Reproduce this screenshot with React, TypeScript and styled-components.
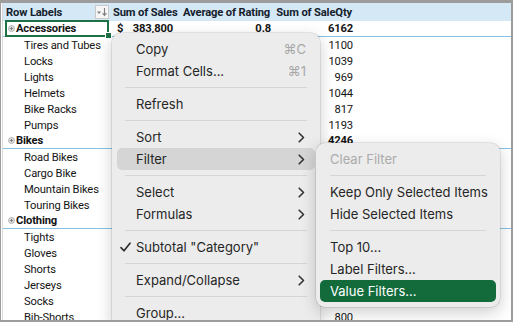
import React from "react";
import styled, { createGlobalStyle } from "styled-components";

const GlobalStyle = createGlobalStyle`
  html, body {
    margin: 0;
    padding: 0;
    background: #ffffff;
  }
  body {
    width: 513px;
    height: 322px;
    overflow: hidden;
  }
`;

const SHEET_FONT = `"Roboto", "Liberation Sans", sans-serif`;
const MENU_FONT = `"Inter", "Liberation Sans", "DejaVu Sans", sans-serif`;
const COLS = "107px 70px 95px 81px";

const Frame = styled.div`
  position: relative;
  width: 513px;
  height: 322px;
  box-sizing: border-box;
  border-style: solid;
  border-color: #9c9c9c;
  border-width: 3px 2px 2px 1px;
  overflow: hidden;
  background: #ffffff;
`;

const Sheet = styled.div`
  display: flex;
  flex-direction: column;
  margin-left: 1px;
  border-left: 1px solid #dadada;
  font-family: ${SHEET_FONT};
  font-size: 11.2px;
  letter-spacing: -0.15px;
  color: #141414;
`;

const HeaderRow = styled.div`
  display: grid;
  grid-template-columns: ${COLS};
  height: 18px;
  background: #d4e8f6;
  font-weight: 700;
  color: #14202c;
`;

const HeadCell = styled.div<{ $right?: boolean }>`
  display: flex;
  align-items: center;
  justify-content: ${(p) => (p.$right ? "flex-end" : "flex-start")};
  padding: ${(p) => (p.$right ? "0 4px 0 0" : "0 0 0 3px")};
  white-space: nowrap;
`;

const LabelHead = styled(HeadCell)`
  padding-left: 3px;
  justify-content: space-between;
`;

const FilterButton = styled.div`
  width: 14px;
  height: 14px;
  margin-right: 1px;
  box-sizing: border-box;
  border: 1px solid #c9c9c9;
  background: #f6f6f6;
  display: flex;
  align-items: center;
  justify-content: center;
`;

const Row = styled.div<{ $category?: boolean }>`
  display: grid;
  grid-template-columns: ${COLS};
  height: 16px;
  box-sizing: border-box;
  font-weight: ${(p) => (p.$category ? 700 : 400)};
  border-bottom: ${(p) => (p.$category ? "1px solid #86c1e4" : "none")};
`;

const LabelCell = styled.div<{ $level: number; $selected?: boolean }>`
  position: relative;
  display: flex;
  align-items: center;
  gap: 1px;
  padding-left: ${(p) => (p.$level === 0 ? "5px" : "21px")};
  white-space: nowrap;

  ${(p) =>
    p.$selected &&
    `
    &::before {
      content: "";
      position: absolute;
      left: 2px;
      right: 1px;
      top: -1px;
      bottom: -1px;
      border: 2px solid #1e7145;
    }
    &::after {
      content: "";
      position: absolute;
      right: -2px;
      bottom: -3px;
      width: 5px;
      height: 5px;
      background: #1e7145;
      border: 1px solid #ffffff;
    }
  `}
`;

const ValueCell = styled.div<{ $pad?: number }>`
  display: flex;
  align-items: center;
  justify-content: flex-end;
  padding-right: ${(p) => p.$pad ?? 4}px;
  white-space: nowrap;
`;

const MoneyCell = styled.div`
  display: flex;
  align-items: center;
  justify-content: space-between;
  padding: 0 7px 0 7px;
  white-space: nowrap;
`;

const Menu = styled.div<{ $left: number; $top: number; $width: number }>`
  position: absolute;
  left: ${(p) => p.$left}px;
  top: ${(p) => p.$top}px;
  width: ${(p) => p.$width}px;
  box-sizing: border-box;
  padding: 5px 0;
  background: #ececec;
  border-radius: 9px;
  box-shadow: 0 0 0 0.5px rgba(0, 0, 0, 0.16), 0 5px 16px rgba(0, 0, 0, 0.2);
  font-family: ${MENU_FONT};
  font-size: 13px;
  color: #262626;
`;

const Item = styled.div<{
  $inset: number;
  $indent: number;
  $active?: "gray" | "green";
  $disabled?: boolean;
}>`
  display: flex;
  align-items: center;
  height: 22px;
  margin: 0 ${(p) => p.$inset}px;
  padding: 0 10px 0 ${(p) => p.$indent}px;
  border-radius: 5px;
  white-space: nowrap;
  background: ${(p) =>
    p.$active === "gray" ? "#d5d5d5" : p.$active === "green" ? "#136b3c" : "transparent"};
  color: ${(p) =>
    p.$active === "green" ? "#ffffff" : p.$disabled ? "#ababab" : "#262626"};
`;

const Mark = styled.span`
  width: 19px;
  margin-left: -19px;
  display: flex;
  align-items: center;
  padding-left: 3px;
  box-sizing: border-box;
`;

const ItemText = styled.span`
  flex: 1;
`;

const Shortcut = styled.span`
  color: #a8a8a8;
  margin-right: -1px;
`;

const Separator = styled.div<{ $inset: number }>`
  height: 11px;
  margin: 0 ${(p) => p.$inset}px;
  display: flex;
  align-items: center;

  &::after {
    content: "";
    flex: 1;
    height: 1px;
    background: #d5d5d5;
  }
`;

type SheetRow = {
  label: string;
  level: 0 | 1;
  sales: string;
  rating: string;
  qty: string;
  selected?: boolean;
};

const rows: SheetRow[] = [
  { label: "Accessories", level: 0, sales: "383,800", rating: "0.8", qty: "6162", selected: true },
  { label: "Tires and Tubes", level: 1, sales: "66,000", rating: "0.8", qty: "1100" },
  { label: "Locks", level: 1, sales: "62,340", rating: "0.8", qty: "1039" },
  { label: "Lights", level: 1, sales: "58,140", rating: "0.8", qty: "969" },
  { label: "Helmets", level: 1, sales: "62,640", rating: "0.8", qty: "1044" },
  { label: "Bike Racks", level: 1, sales: "49,020", rating: "0.8", qty: "817" },
  { label: "Pumps", level: 1, sales: "71,580", rating: "0.8", qty: "1193" },
  { label: "Bikes", level: 0, sales: "254,760", rating: "0.8", qty: "4246" },
  { label: "Road Bikes", level: 1, sales: "63,900", rating: "0.8", qty: "1065" },
  { label: "Cargo Bike", level: 1, sales: "61,080", rating: "0.8", qty: "1018" },
  { label: "Mountain Bikes", level: 1, sales: "65,460", rating: "0.8", qty: "1091" },
  { label: "Touring Bikes", level: 1, sales: "64,320", rating: "0.8", qty: "1072" },
  { label: "Clothing", level: 0, sales: "352,440", rating: "0.8", qty: "5874" },
  { label: "Tights", level: 1, sales: "58,560", rating: "0.8", qty: "976" },
  { label: "Gloves", level: 1, sales: "60,420", rating: "0.8", qty: "1007" },
  { label: "Shorts", level: 1, sales: "57,840", rating: "0.8", qty: "964" },
  { label: "Jerseys", level: 1, sales: "62,100", rating: "0.8", qty: "1035" },
  { label: "Socks", level: 1, sales: "65,520", rating: "0.8", qty: "1092" },
  { label: "Bib-Shorts", level: 1, sales: "48,000", rating: "0.8", qty: "800" },
];

const ExpandIcon = () => (
  <svg width="7" height="7" viewBox="0 0 7 7">
    <circle cx="3.5" cy="3.5" r="3" fill="#e4e4e4" stroke="#a8a8a8" strokeWidth="0.8" />
    <path d="M1.8 3.5h3.4M3.5 1.8v3.4" stroke="#7a7a7a" strokeWidth="0.9" />
  </svg>
);

const FilterGlyph = () => (
  <svg width="12" height="10" viewBox="0 0 12 10">
    <path d="M1 4.5h4L3 7z" fill="#7d7d7d" />
    <path d="M8.5 1v7.5M6.6 6.2l1.9 2.3 1.9-2.3" fill="none" stroke="#7d7d7d" strokeWidth="1.1" />
  </svg>
);

const Chevron = () => (
  <svg width="7" height="11" viewBox="0 0 7 11">
    <path d="M1.2 1.2l4.3 4.3-4.3 4.3" fill="none" stroke="#333333" strokeWidth="1.6" strokeLinecap="round" strokeLinejoin="round" />
  </svg>
);

const Check = () => (
  <svg width="11" height="10" viewBox="0 0 11 10">
    <path d="M1 5.6l3 3.2L10 1.2" fill="none" stroke="#2a2a2a" strokeWidth="1.6" strokeLinecap="round" strokeLinejoin="round" />
  </svg>
);

type MenuEntry =
  | { sep: true }
  | {
      sep?: false;
      label: string;
      shortcut?: string;
      sub?: boolean;
      checked?: boolean;
      active?: "gray" | "green";
      disabled?: boolean;
    };

const mainMenu: MenuEntry[] = [
  { label: "Copy", shortcut: "⌘C" },
  { label: "Format Cells...", shortcut: "⌘1" },
  { sep: true },
  { label: "Refresh" },
  { sep: true },
  { label: "Sort", sub: true },
  { label: "Filter", sub: true, active: "gray" },
  { sep: true },
  { label: "Select", sub: true },
  { label: "Formulas", sub: true },
  { sep: true },
  { label: 'Subtotal "Category"', checked: true },
  { sep: true },
  { label: "Expand/Collapse", sub: true },
  { sep: true },
  { label: "Group..." },
];

const filterMenu: MenuEntry[] = [
  { label: "Clear Filter", disabled: true },
  { sep: true },
  { label: "Keep Only Selected Items" },
  { label: "Hide Selected Items" },
  { sep: true },
  { label: "Top 10..." },
  { label: "Label Filters..." },
  { label: "Value Filters...", active: "green" },
];

const MenuList: React.FC<{
  entries: MenuEntry[];
  inset: number;
  indent: number;
  sepInset: number;
}> = ({ entries, inset, indent, sepInset }) => (
  <>
    {entries.map((e, i) =>
      e.sep ? (
        <Separator key={i} $inset={sepInset} />
      ) : (
        <Item key={i} $inset={inset} $indent={indent} $active={e.active} $disabled={e.disabled}>
          {e.checked && (
            <Mark>
              <Check />
            </Mark>
          )}
          <ItemText>{e.label}</ItemText>
          {e.shortcut && <Shortcut>{e.shortcut}</Shortcut>}
          {e.sub && <Chevron />}
        </Item>
      )
    )}
  </>
);

export default function App() {
  return (
    <>
      <GlobalStyle />
      <Frame>
        <Sheet>
          <HeaderRow>
            <LabelHead>
              Row Labels
              <FilterButton>
                <FilterGlyph />
              </FilterButton>
            </LabelHead>
            <HeadCell>Sum of Sales</HeadCell>
            <HeadCell>Average of Rating</HeadCell>
            <HeadCell $right>Sum of SaleQty</HeadCell>
          </HeaderRow>
          {rows.map((r) => (
            <Row key={r.label} $category={r.level === 0}>
              <LabelCell $level={r.level} $selected={r.selected}>
                {r.level === 0 && <ExpandIcon />}
                {r.label}
              </LabelCell>
              <MoneyCell>
                <span>$</span>
                <span>{r.sales}</span>
              </MoneyCell>
              <ValueCell>{r.rating}</ValueCell>
              <ValueCell $pad={3}>{r.qty}</ValueCell>
            </Row>
          ))}
        </Sheet>

        <Menu $left={111} $top={30} $width={208}>
          <MenuList entries={mainMenu} inset={5} indent={19} sepInset={13} />
        </Menu>

        <Menu $left={315} $top={140} $width={184}>
          <MenuList entries={filterMenu} inset={4} indent={10} sepInset={14} />
        </Menu>
      </Frame>
    </>
  );
}
